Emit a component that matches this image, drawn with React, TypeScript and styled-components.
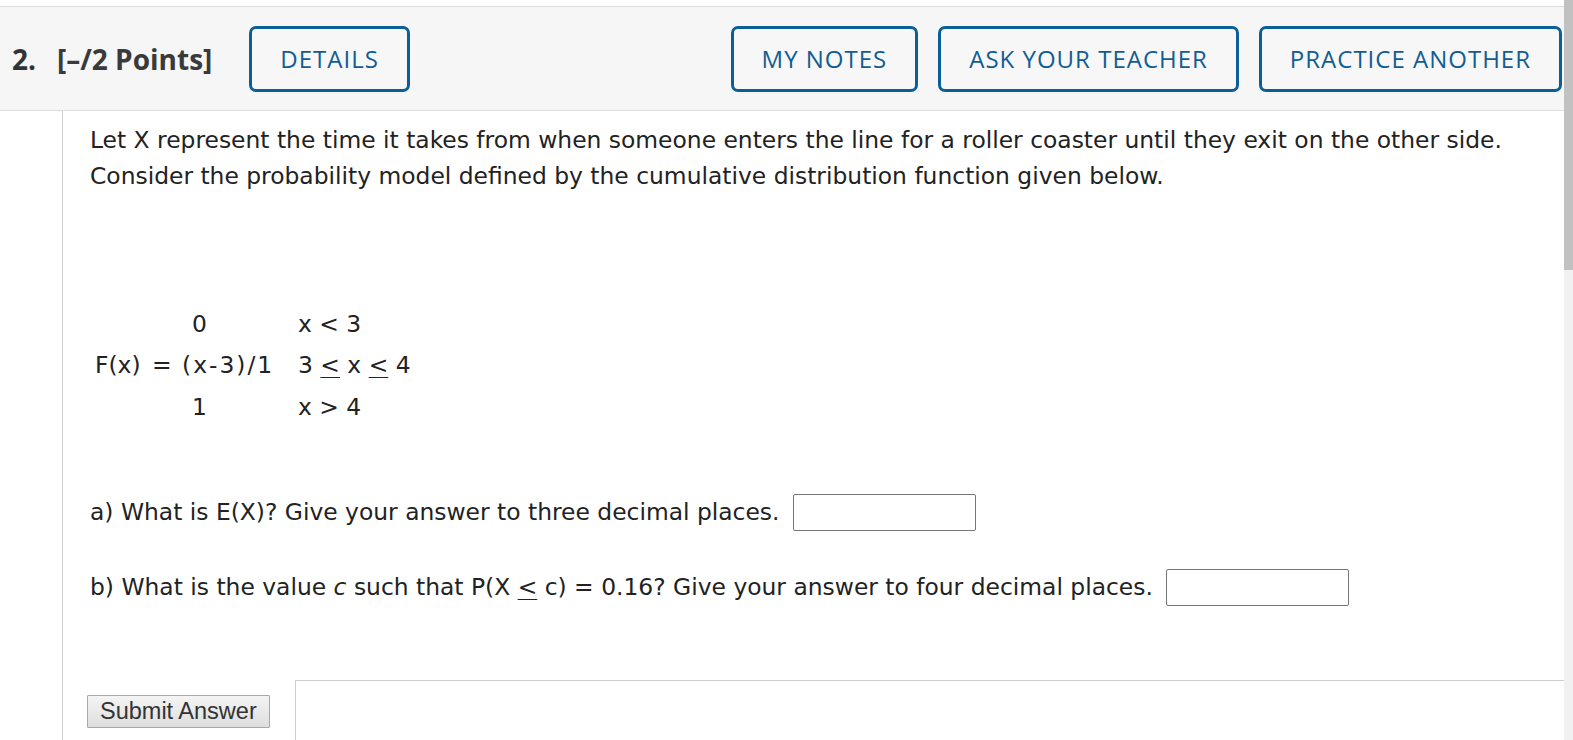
import styled, { createGlobalStyle } from "styled-components";

const GlobalStyle = createGlobalStyle`
  html, body {
    margin: 0;
    padding: 0;
    background: #fff;
    overflow: hidden;
  }
  * {
    box-sizing: border-box;
  }
`;

const Page = styled.div`
  display: flex;
  width: 100%;
  height: 740px;
`;

const Main = styled.div`
  flex: 1;
  padding-top: 6px;
  display: flex;
  flex-direction: column;
  min-width: 0;
`;

const Scrollbar = styled.div`
  width: 9px;
  background: #f1f1f1;
  display: flex;
  flex-direction: column;
`;

const Thumb = styled.div`
  height: 270px;
  background: #c1c1c1;
`;

const Header = styled.div`
  height: 105px;
  background: #f6f6f6;
  border-top: 1px solid #dcdcdc;
  border-bottom: 1px solid #dcdcdc;
  display: flex;
  align-items: center;
  padding: 0 2px 0 12px;
  font-family: "Open Sans", sans-serif;
`;

const Number = styled.span`
  font-size: 28px;
  font-weight: 700;
  color: #333;
  width: 45px;
`;

const Points = styled.span`
  font-size: 28px;
  font-weight: 700;
  color: #3a3a3a;
  margin-right: 37px;
`;

const Actions = styled.div`
  margin-left: auto;
  display: flex;
  gap: 20px;
`;

const HeaderButton = styled.button`
  height: 66px;
  padding: 0 28px;
  border: 3px solid #0b5e98;
  border-radius: 7px;
  background: #f7f7f7;
  color: #115d93;
  font-family: "Open Sans", sans-serif;
  font-size: 24px;
  letter-spacing: 1px;
  cursor: pointer;
`;

const Content = styled.div`
  flex: 1;
  margin-left: 62px;
  border-left: 1px solid #cfcfcf;
  padding-left: 27px;
  font-family: "DejaVu Sans", sans-serif;
  font-size: 23.4px;
  color: #222;
  display: flex;
  flex-direction: column;
`;

const Intro = styled.p`
  margin: 11px 0 0;
  line-height: 36px;
`;

const Formula = styled.div`
  margin-top: 109px;
  display: grid;
  grid-template-columns: 57px 30px 116px auto;
  grid-auto-rows: 41.5px;
  align-items: center;
  margin-left: 5px;
`;

const Cell = styled.div<{ $pad?: number; $spaced?: boolean }>`
  padding-left: ${(p) => p.$pad ?? 0}px;
  letter-spacing: ${(p) => (p.$spaced ? "2px" : "normal")};
  white-space: nowrap;
`;

const Under = styled.span`
  text-decoration: underline;
  text-decoration-thickness: 1px;
  text-underline-offset: 4px;
`;

const Question = styled.div<{ $top: number }>`
  margin-top: ${(p) => p.$top}px;
  display: flex;
  align-items: center;
  gap: 13px;
  white-space: nowrap;
`;

const Answer = styled.input`
  width: 183px;
  height: 37px;
  border: 1px solid #767676;
  border-radius: 2px;
  background: #fff;
`;

const SubmitRow = styled.div`
  margin-top: 74px;
  display: flex;
  align-items: flex-start;
  margin-left: -3px;
  flex: 1;
`;

const SubmitButton = styled.button`
  margin-top: 15px;
  height: 33px;
  padding: 0 12px;
  border: 1px solid #a9a9a9;
  border-radius: 1px;
  background: linear-gradient(#f4f4f4, #dedede);
  color: #333;
  font-family: "Liberation Sans", Arial, sans-serif;
  font-size: 23.5px;
`;

const Feedback = styled.div`
  flex: 1;
  margin-left: 25px;
  align-self: stretch;
  border-top: 1px solid #cfcfcf;
  border-left: 1px solid #cfcfcf;
`;

export default function App() {
  return (
    <>
      <GlobalStyle />
      <Page>
        <Main>
          <Header>
            <Number>2.</Number>
            <Points>[–/2 Points]</Points>
            <HeaderButton>DETAILS</HeaderButton>
            <Actions>
              <HeaderButton>MY NOTES</HeaderButton>
              <HeaderButton>ASK YOUR TEACHER</HeaderButton>
              <HeaderButton>PRACTICE ANOTHER</HeaderButton>
            </Actions>
          </Header>
          <Content>
            <Intro>
              Let X represent the time it takes from when someone enters the line for a roller coaster until they exit on the other side.
              <br />
              Consider the probability model defined by the cumulative distribution function given below.
            </Intro>
            <Formula>
              <Cell />
              <Cell />
              <Cell $pad={10}>0</Cell>
              <Cell>x &lt; 3</Cell>
              <Cell>F(x)</Cell>
              <Cell>=</Cell>
              <Cell $spaced>(x-3)/1</Cell>
              <Cell>
                3 <Under>&lt;</Under> x <Under>&lt;</Under> 4
              </Cell>
              <Cell />
              <Cell />
              <Cell $pad={10}>1</Cell>
              <Cell>x &gt; 4</Cell>
            </Formula>
            <Question $top={66}>
              <span>a) What is E(X)? Give your answer to three decimal places.</span>
              <Answer type="text" />
            </Question>
            <Question $top={38}>
              <span>
                b) What is the value <i>c</i> such that P(X <Under>&lt;</Under> c) = 0.16? Give your answer to four decimal places.
              </span>
              <Answer type="text" />
            </Question>
            <SubmitRow>
              <SubmitButton>Submit Answer</SubmitButton>
              <Feedback />
            </SubmitRow>
          </Content>
        </Main>
        <Scrollbar>
          <Thumb />
        </Scrollbar>
      </Page>
    </>
  );
}
